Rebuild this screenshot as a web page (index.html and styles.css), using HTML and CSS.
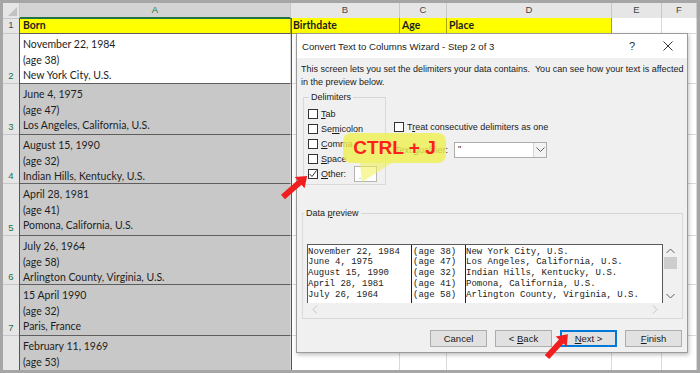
FILE: index.html
```html
<!DOCTYPE html>
<html lang="en">
<head>
  <meta charset="UTF-8">
  <meta name="viewport" content="width=device-width, initial-scale=1.0">
  <title>Convert Text to Columns</title>
  <link rel="stylesheet" href="styles.css">
</head>
<body>
  <div class="screen">
    <div class="sheet">
      <div class="row head">
        <div class="corner"></div>
        <div class="ch on">A</div>
        <div class="ch">B</div>
        <div class="ch">C</div>
        <div class="ch">D</div>
        <div class="ch">E</div>
        <div class="ch">F</div>
      </div>
      <div class="row r1">
        <div class="rh first">1</div>
        <div class="cell a hd">Born</div>
        <div class="cell hd">Birthdate</div>
        <div class="cell hd">Age</div>
        <div class="cell hd">Place</div>
        <div class="cell"></div>
        <div class="cell"></div>
      </div>
      <div class="row r2">
        <div class="rh">2</div>
        <div class="cell a active">November 22, 1984<br>(age 38)<br>New York City, U.S.</div>
        <div class="cell"></div><div class="cell"></div><div class="cell"></div><div class="cell"></div><div class="cell"></div>
      </div>
      <div class="row r3">
        <div class="rh">3</div>
        <div class="cell a">June 4, 1975<br>(age 47)<br>Los Angeles, California, U.S.</div>
        <div class="cell"></div><div class="cell"></div><div class="cell"></div><div class="cell"></div><div class="cell"></div>
      </div>
      <div class="row r4">
        <div class="rh">4</div>
        <div class="cell a">August 15, 1990<br>(age 32)<br>Indian Hills, Kentucky, U.S.</div>
        <div class="cell"></div><div class="cell"></div><div class="cell"></div><div class="cell"></div><div class="cell"></div>
      </div>
      <div class="row r5">
        <div class="rh">5</div>
        <div class="cell a">April 28, 1981<br>(age 41)<br>Pomona, California, U.S.</div>
        <div class="cell"></div><div class="cell"></div><div class="cell"></div><div class="cell"></div><div class="cell"></div>
      </div>
      <div class="row r6">
        <div class="rh">6</div>
        <div class="cell a">July 26, 1964<br>(age 58)<br>Arlington County, Virginia, U.S.</div>
        <div class="cell"></div><div class="cell"></div><div class="cell"></div><div class="cell"></div><div class="cell"></div>
      </div>
      <div class="row r7">
        <div class="rh">7</div>
        <div class="cell a">15 April 1990<br>(age 32)<br>Paris, France</div>
        <div class="cell"></div><div class="cell"></div><div class="cell"></div><div class="cell"></div><div class="cell"></div>
      </div>
      <div class="row r8">
        <div class="rh"></div>
        <div class="cell a">February 11, 1969<br>(age 53)</div>
        <div class="cell"></div><div class="cell"></div><div class="cell"></div><div class="cell"></div><div class="cell"></div>
      </div>
    </div>

    <div class="selection"></div>

    <div class="dialog">
      <div class="titlebar">
        <span class="title">Convert Text to Columns Wizard - Step 2 of 3</span>
        <span class="help">?</span>
        <svg class="close" width="10" height="10" viewBox="0 0 10 10"><path d="M0.5 0.5 9.5 9.5 M9.5 0.5 0.5 9.5" stroke="#333" stroke-width="1"/></svg>
      </div>
      <div class="body">
        <p class="desc">This screen lets you set the delimiters your data contains.&nbsp; You can see how your text is affected<br>in the preview below.</p>

        <div class="options">
          <div class="group delims">
            <span class="legend">Delimiters</span>
            <div class="opts">
              <div class="opt"><span class="box"></span><span><u>T</u>ab</span></div>
              <div class="opt"><span class="box"></span><span>Se<u>m</u>icolon</span></div>
              <div class="opt"><span class="box"></span><span><u>C</u>omma</span></div>
              <div class="opt"><span class="box"></span><span><u>S</u>pace</span></div>
              <div class="opt"><span class="box"><svg width="10" height="10" viewBox="0 0 10 10"><path d="M1.5 5 4 7.5 8.5 1.5" fill="none" stroke="#333" stroke-width="1"/></svg></span><span><u>O</u>ther:</span><span class="other">.</span></div>
            </div>
          </div>
          <div class="side">
            <div class="opt"><span class="box"></span><span>T<u>r</u>eat consecutive delimiters as one</span></div>
            <div class="qual">
              <span class="qlabel">Text <u>q</u>ualifier:</span>
              <span class="combo">
                <span class="val">"</span>
                <span class="drop"><svg width="9" height="6" viewBox="0 0 9 6"><path d="M0.5 0.5 4.5 4.5 8.5 0.5" fill="none" stroke="#606060" stroke-width="1"/></svg></span>
              </span>
            </div>
          </div>
        </div>

        <div class="group previewgroup">
          <span class="legend">Data <u>p</u>review</span>
          <div class="preview">
            <div class="pv-main">
              <div class="pv-data">
                <div class="pcol c1">November 22, 1984<br>June 4, 1975<br>August 15, 1990<br>April 28, 1981<br>July 26, 1964</div>
                <div class="pcol c2">(age 38)<br>(age 47)<br>(age 32)<br>(age 41)<br>(age 58)</div>
                <div class="pcol c3">New York City, U.S.<br>Los Angeles, California, U.S.<br>Indian Hills, Kentucky, U.S.<br>Pomona, California, U.S.<br>Arlington County, Virginia, U.S.</div>
              </div>
              <div class="vscroll">
                <svg width="9" height="6" viewBox="0 0 9 6"><path d="M0.5 5 4.5 1 8.5 5" fill="none" stroke="#606060" stroke-width="1"/></svg>
                <span class="thumb"></span>
                <svg width="9" height="6" viewBox="0 0 9 6"><path d="M0.5 1 4.5 5 8.5 1" fill="none" stroke="#606060" stroke-width="1"/></svg>
              </div>
            </div>
            <div class="hscroll">
              <svg width="6" height="9" viewBox="0 0 6 9"><path d="M5 0.5 1 4.5 5 8.5" fill="none" stroke="#c4c4c4" stroke-width="1"/></svg>
              <svg width="6" height="9" viewBox="0 0 6 9"><path d="M1 0.5 5 4.5 1 8.5" fill="none" stroke="#c4c4c4" stroke-width="1"/></svg>
            </div>
          </div>
        </div>

        <div class="buttons">
          <span class="btn">Cancel</span>
          <span class="btn">&lt; <u>B</u>ack</span>
          <span class="btn primary"><u>N</u>ext &gt;</span>
          <span class="btn"><u>F</u>inish</span>
        </div>
      </div>
    </div>

    <div class="callout">CTRL + J</div>

    <svg class="arrows" width="694" height="367" viewBox="0 0 694 367">
      <g transform="translate(280 194) rotate(-41)">
        <polygon points="0,-3 22,-3 22,-7.5 32,0 22,7.5 22,3 0,3" fill="#f01e1e"/>
      </g>
      <g transform="translate(544 354) rotate(-47.5)">
        <polygon points="0,-3 21,-3 21,-7.5 31,0 21,7.5 21,3 0,3" fill="#f01e1e"/>
      </g>
    </svg>
  </div>
</body>
</html>
```

FILE: styles.css
```css
* {
  margin: 0;
  padding: 0;
  box-sizing: border-box;
}
body {
  background: #fff;
}
.screen {
  position: relative;
  width: 700px;
  height: 373px;
  border: 3px solid #a6a6a6;
  overflow: hidden;
  background: #fff;
}

/* spreadsheet */
.sheet {
  display: flex;
  flex-direction: column;
  font-family: Lato, "Liberation Sans", sans-serif;
  font-size: 10.5px;
  color: #1e1e1e;
}
.row {
  display: grid;
  grid-template-columns: 17px 271px 109px 47px 165px 50px 35px;
  flex-shrink: 0;
}
.head { height: 15px; }
.r1 { height: 16px; }
.r2 { height: 50px; }
.r3 { height: 51px; }
.r4 { height: 49px; }
.r5 { height: 52px; }
.r6 { height: 49px; }
.r7 { height: 51px; }
.r8 { height: 50px; }

.corner {
  position: relative;
  background: #e6e6e6;
  border-right: 1px solid #c8c8c8;
  border-bottom: 1px solid #c8c8c8;
}
.corner::after {
  content: "";
  position: absolute;
  right: 2px;
  bottom: 2px;
  width: 0;
  height: 0;
  border-left: 9px solid transparent;
  border-bottom: 9px solid #c2c2c2;
}
.ch {
  background: #e6e6e6;
  border-right: 1px solid #c8c8c8;
  border-bottom: 1px solid #bdbdbd;
  color: #444;
  text-align: center;
  font-family: "Liberation Sans", sans-serif;
  font-size: 9.5px;
  line-height: 14px;
}
.ch.on {
  background: #d3d3d3;
  color: #217346;
  border-bottom: 2px solid #217346;
}
.rh {
  background: #e6e6e6;
  border-right: 1px solid #c8c8c8;
  border-bottom: 1px solid #c8c8c8;
  color: #217346;
  font-family: "Liberation Sans", sans-serif;
  font-size: 9.5px;
  text-align: center;
  display: flex;
  align-items: flex-end;
  justify-content: center;
  padding-bottom: 1px;
  line-height: 12px;
}
.rh.first {
  color: #3a4c5c;
  align-items: center;
}
.cell {
  background: #fff;
  border-right: 1px solid #d9d9d9;
  border-bottom: 1px solid #d9d9d9;
  padding: 3px 2px 0;
  line-height: 15.6px;
  white-space: nowrap;
  overflow: hidden;
}
.cell.hd {
  background: #ffff00;
  font-weight: bold;
  padding-top: 0;
  line-height: 15px;
  border-right: 1px solid #a8a800;
  border-bottom: 1px solid #a8a800;
}
.cell.a {
  background: #c8c8c8;
  border-bottom: 1px solid #5e5e5e;
  padding-left: 3px;
}
.cell.a.hd {
  background: #ffff00;
}
.cell.a.active {
  background: #fff;
}
.selection {
  position: absolute;
  left: 16px;
  top: 15px;
  width: 273px;
  height: 360px;
  border: 1.5px solid #217346;
  border-bottom: none;
}

/* dialog */
.dialog {
  position: absolute;
  left: 293px;
  top: 30px;
  width: 392px;
  height: 320px;
  background: #f0f0f0;
  border: 1px solid #9b9b9b;
  box-shadow: 1px 2px 4px rgba(0, 0, 0, 0.25);
  font-family: "Liberation Sans", Arial, sans-serif;
  font-size: 9px;
  color: #1a1a1a;
}
.titlebar {
  height: 24px;
  background: #fff;
  display: flex;
  align-items: center;
  padding-left: 5px;
}
.title {
  font-size: 9.6px;
  color: #222;
  flex: 1;
}
.help {
  font-size: 11px;
  color: #333;
  margin-right: 28px;
}
.close {
  margin-right: 14px;
}
.body {
  padding: 0 0 0 0;
}
.desc {
  margin: 5px 0 0 4px;
  line-height: 13px;
  white-space: nowrap;
}
.options {
  display: flex;
  align-items: flex-start;
  margin-top: 8px;
}
.group {
  border: 1px solid #d9d9d9;
  border-top-color: #d5d5d5;
}
.legend {
  display: block;
  width: fit-content;
  margin: -7px 0 0 1px;
  padding: 0 2px;
  line-height: 12px;
  background: #f0f0f0;
}
.delims {
  width: 83px;
  height: 88px;
  margin-left: 6px;
  padding-left: 4px;
}
.opts {
  margin-top: 3px;
}
.opt {
  display: flex;
  align-items: center;
  height: 15px;
  white-space: nowrap;
}
.box {
  width: 10px;
  height: 10px;
  border: 1px solid #333;
  background: #fff;
  margin-right: 3px;
  flex-shrink: 0;
  display: flex;
}
.box svg {
  margin: -1px;
}
.other {
  width: 23px;
  height: 16px;
  margin-left: 8px;
  background: #fff;
  border: 1px solid #b5b5b5;
  font-size: 7px;
  line-height: 20px;
  padding-left: 4px;
  color: #555;
}
.side {
  margin-left: 8px;
  padding-top: 23px;
}
.side .opt {
  height: 14px;
}
.qual {
  display: flex;
  align-items: center;
  margin-top: 8px;
  height: 16px;
}
.qlabel {
  width: 60px;
  padding-left: 1px;
}
.combo {
  width: 93px;
  height: 16px;
  background: #fff;
  border: 1px solid #adadad;
  display: flex;
}
.val {
  flex: 1;
  padding-left: 3px;
  line-height: 13px;
}
.drop {
  width: 13px;
  border-left: 1px solid #d6d6d6;
  background: #f3f3f3;
  display: flex;
  align-items: center;
  justify-content: center;
}

.previewgroup {
  margin: 28px 0 0 5px;
  width: 381px;
  height: 106px;
}
.preview {
  margin: 25px 0 0 4px;
  width: 370px;
}
.pv-main {
  display: flex;
  height: 59px;
}
.pv-data {
  width: 356px;
  background: #fff;
  border: 1px solid #5a5a5a;
  border-bottom: none;
  display: grid;
  grid-template-columns: 104px 54px 1fr;
  font-family: "Liberation Mono", monospace;
  font-size: 9px;
  line-height: 10.8px;
  color: #222;
  white-space: nowrap;
  overflow: hidden;
}
.pcol {
  padding-top: 1.5px;
}
.c1, .c2 {
  border-right: 1px solid #222;
}
.c2 {
  padding-left: 1px;
}
.vscroll {
  width: 14px;
  display: flex;
  flex-direction: column;
  align-items: center;
  padding-top: 4px;
}
.thumb {
  width: 13px;
  height: 12px;
  background: #cdcdcd;
  margin: 3px 0 auto;
}
.vscroll svg:last-child {
  margin-bottom: 4px;
}
.hscroll {
  width: 356px;
  height: 12px;
  display: flex;
  align-items: center;
  justify-content: space-between;
  padding: 0 5px;
}

.buttons {
  display: flex;
  justify-content: flex-end;
  gap: 8px;
  margin-top: 11px;
  padding-right: 5px;
}
.btn {
  width: 57px;
  height: 17px;
  background: #e1e1e1;
  border: 1px solid #adadad;
  text-align: center;
  line-height: 15px;
  font-size: 9.5px;
}
.btn.primary {
  border: 2px solid #0078d7;
  line-height: 13px;
}

/* annotations */
.callout {
  position: absolute;
  left: 340px;
  top: 130px;
  width: 103px;
  height: 30px;
  border-radius: 8px;
  background: rgba(240, 240, 80, 0.8);
  color: #ff1e1e;
  font-family: "Liberation Sans", Arial, sans-serif;
  font-weight: bold;
  font-size: 19px;
  line-height: 30px;
  text-align: center;
}
.callout::after {
  content: "";
  position: absolute;
  left: 17px;
  top: 30px;
  width: 32px;
  height: 19px;
  background: rgba(240, 240, 80, 0.55);
  clip-path: polygon(0 0, 100% 0, 6% 100%);
}
.arrows {
  position: absolute;
  left: 0;
  top: 0;
  pointer-events: none;
}
```
